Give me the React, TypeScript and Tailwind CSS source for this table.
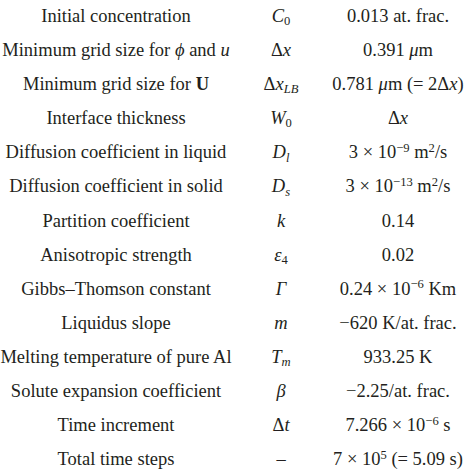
import type { ReactNode } from "react";

const I = ({ children }: { children: ReactNode }) => <i>{children}</i>;
const Sub = ({ children }: { children: ReactNode }) => (
  <sub className="text-[0.68em]">{children}</sub>
);
const Sup = ({ children }: { children: ReactNode }) => (
  <sup className="text-[0.68em]">{children}</sup>
);

const rows: [ReactNode, ReactNode, ReactNode][] = [
  ["Initial concentration", <><I>C</I><Sub>0</Sub></>, "0.013 at. frac."],
  [
    <>Minimum grid size for <I>ϕ</I> and <I>u</I></>,
    <>Δ<I>x</I></>,
    <>0.391 <I>μ</I>m</>,
  ],
  [
    <>Minimum grid size for <b>U</b></>,
    <>Δ<I>x</I><Sub><I>LB</I></Sub></>,
    <>0.781 <I>μ</I>m (= 2Δ<I>x</I>)</>,
  ],
  ["Interface thickness", <><I>W</I><Sub>0</Sub></>, <>Δ<I>x</I></>],
  [
    "Diffusion coefficient in liquid",
    <><I>D</I><Sub><I>l</I></Sub></>,
    <>3 × 10<Sup>−9</Sup> m<Sup>2</Sup>/s</>,
  ],
  [
    "Diffusion coefficient in solid",
    <><I>D</I><Sub><I>s</I></Sub></>,
    <>3 × 10<Sup>−13</Sup> m<Sup>2</Sup>/s</>,
  ],
  ["Partition coefficient", <I>k</I>, "0.14"],
  ["Anisotropic strength", <><I>ε</I><Sub>4</Sub></>, "0.02"],
  ["Gibbs–Thomson constant", <I>Γ</I>, <>0.24 × 10<Sup>−6</Sup> Km</>],
  ["Liquidus slope", <I>m</I>, "−620 K/at. frac."],
  ["Melting temperature of pure Al", <><I>T</I><Sub><I>m</I></Sub></>, "933.25 K"],
  ["Solute expansion coefficient", <I>β</I>, "−2.25/at. frac."],
  ["Time increment", <>Δ<I>t</I></>, <>7.266 × 10<Sup>−6</Sup> s</>],
  ["Total time steps", "–", <>7 × 10<Sup>5</Sup> (= 5.09 s)</>],
];

export default function App() {
  return (
    <div
      className="w-[474px] h-[474px] overflow-hidden bg-white text-[#231f20] text-[18.5px]"
      style={{ fontFamily: '"Liberation Serif", "Times New Roman", serif' }}
    >
      <div className="-mt-[1px] grid grid-cols-[232px_98px_136px]">
        {rows.map(([name, sym, val], i) => (
          <div key={i} className="contents">
            <div className="h-[34.1px] leading-[34.1px] text-center whitespace-nowrap">{name}</div>
            <div className="h-[34.1px] leading-[34.1px] text-center whitespace-nowrap">{sym}</div>
            <div className="h-[34.1px] leading-[34.1px] text-center whitespace-nowrap">{val}</div>
          </div>
        ))}
      </div>
    </div>
  );
}
